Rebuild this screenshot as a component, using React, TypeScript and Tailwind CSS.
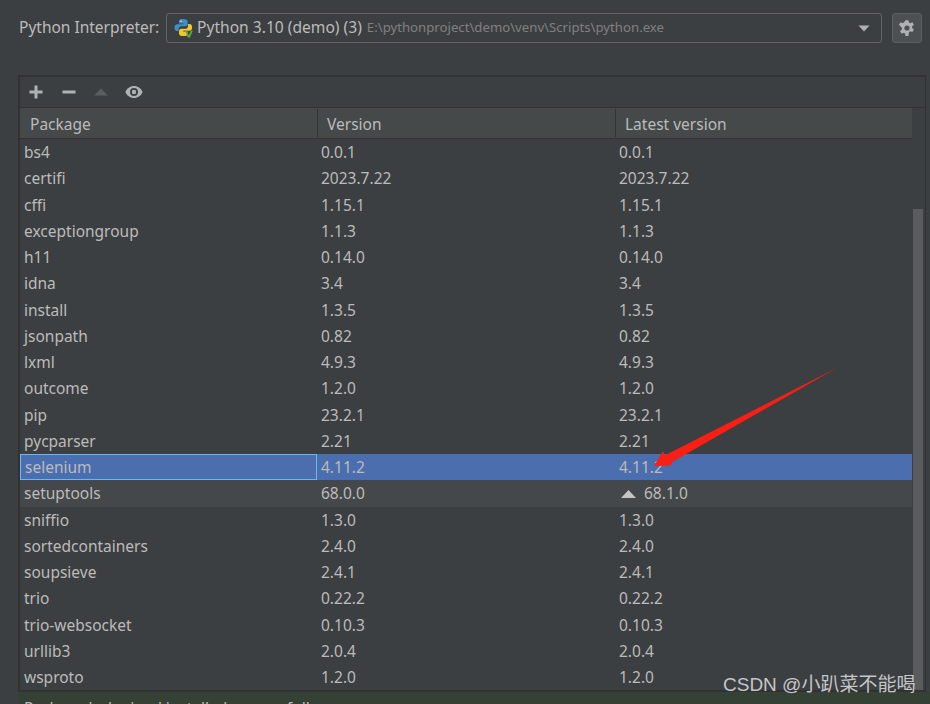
import React from "react";

const rows: [string, string, string][] = [
  ["bs4", "0.0.1", "0.0.1"],
  ["certifi", "2023.7.22", "2023.7.22"],
  ["cffi", "1.15.1", "1.15.1"],
  ["exceptiongroup", "1.1.3", "1.1.3"],
  ["h11", "0.14.0", "0.14.0"],
  ["idna", "3.4", "3.4"],
  ["install", "1.3.5", "1.3.5"],
  ["jsonpath", "0.82", "0.82"],
  ["lxml", "4.9.3", "4.9.3"],
  ["outcome", "1.2.0", "1.2.0"],
  ["pip", "23.2.1", "23.2.1"],
  ["pycparser", "2.21", "2.21"],
  ["selenium", "4.11.2", "4.11.2"],
  ["setuptools", "68.0.0", "68.1.0"],
  ["sniffio", "1.3.0", "1.3.0"],
  ["sortedcontainers", "2.4.0", "2.4.0"],
  ["soupsieve", "2.4.1", "2.4.1"],
  ["trio", "0.22.2", "0.22.2"],
  ["trio-websocket", "0.10.3", "0.10.3"],
  ["urllib3", "2.0.4", "2.0.4"],
  ["wsproto", "1.2.0", "1.2.0"],
];

function PythonIcon() {
  return (
    <svg width="20" height="20" viewBox="0 0 20 20" className="shrink-0">
      <path d="M9 1C5.5 1 5 2.2 5 3.6V5.5h4.4v.8H3.2C1.400 6.300.5 7.600.5 9.600s.9 3.500 2.600 3.500h1.500v-2c0-1.700 1.300-2.900 3-2.900h3.800c1.300 0 2.200-1 2.200-2.300V3.600C13.600 2 12.300 1 9 1z" fill="#3d8fc9" />
      <circle cx="7" cy="3.2" r="0.8" fill="#dfeaf2" />
      <path d="M9.600 18c3.500 0 4-1.200 4-2.600v-1.900H9.200v-.8h6.200c1.800 0 2.700-1.300 2.700-3.300s-.9-3.500-2.600-3.500H14v2c0 1.700-1.300 2.900-3 2.900H7.200C5.900 10.800 5 11.800 5 13.100v2.300C5 17 6.300 18 9.600 18z" fill="#f2c531" />
      <path d="M11 12.500h2.100l1.800 5 1.800-5h2.100L16 19.600h-2.200z" fill="#5cab3c" />
    </svg>
  );
}

function Plus() {
  return (
    <svg width="14" height="14" viewBox="0 0 14 14">
      <path d="M5.500 0.500h3V5.500h5v3h-5v5h-3v-5h-5v-3h5z" fill="#aeb2b5" />
    </svg>
  );
}

function Minus() {
  return (
    <svg width="14" height="14" viewBox="0 0 14 14">
      <rect x="0.500" y="5.500" width="13" height="3" fill="#aeb2b5" />
    </svg>
  );
}

function Up() {
  return (
    <svg width="16" height="10" viewBox="0 0 16 10">
      <path d="M8 1.500l7 7H1z" fill="#5b5e60" />
    </svg>
  );
}

function Eye() {
  return (
    <svg width="18" height="12" viewBox="0 0 18 12">
      <path fillRule="evenodd" d="M9 0c4 0 7.200 2.500 8.600 6C16.200 9.500 13 12 9 12S1.800 9.500.4 6C1.800 2.500 5 0 9 0zm0 2a4 4 0 1 0 0 8 4 4 0 0 0 0-8zm0 1.800a2.200 2.200 0 1 1 0 4.400 2.200 2.200 0 0 1 0-4.400z" fill="#aeb2b5" />
    </svg>
  );
}

function Gear() {
  return (
    <svg width="18" height="18" viewBox="0 0 16 16">
      <path fillRule="evenodd" d="M6.700 0h2.600l.4 2.100c.4.150.8.350 1.100.6l2-.75 1.300 2.250-1.600 1.400c.1.400.1.900 0 1.300l1.600 1.400-1.300 2.250-2-.7c-.3.250-.7.450-1.100.6L9.300 14H6.700l-.4-2.100c-.4-.15-.8-.35-1.100-.6l-2 .75-1.300-2.250 1.600-1.400c-.1-.4-.1-.9 0-1.300L.9 4.200l1.300-2.250 2 .75c.3-.25.7-.45 1.100-.6zM8 4.700a2.300 2.300 0 1 0 0 4.600 2.300 2.300 0 0 0 0-4.600z" transform="translate(0 1)" fill="#afb1b3" />
    </svg>
  );
}

export default function App() {
  return (
    <div
      className="relative w-[930px] h-[704px] overflow-hidden bg-[#3c3f41] text-[15.5px] text-[#bbbbbb]"
      style={{ fontFamily: '"Noto Sans", "Open Sans", sans-serif' }}
    >
      <div className="flex items-center h-[30px] mt-[13px] ml-[19px] mr-[7px]">
        <span className="w-[147px] shrink-0 whitespace-nowrap">Python Interpreter:</span>
        <div className="flex items-center w-[716px] h-[30px] rounded-[3px] border border-[#646464] pl-[7px] pr-[11px]">
          <PythonIcon />
          <span className="ml-[3px] text-[15.6px] whitespace-nowrap">Python 3.10 (demo) (3)</span>
          <span className="ml-[5px] whitespace-nowrap text-[13.2px] text-[#808080]">E:\pythonproject\demo\venv\Scripts\python.exe</span>
          <svg width="12" height="7" viewBox="0 0 12 7" className="ml-auto">
            <path d="M0.500 0.500h11L6 6.500z" fill="#afb1b3" />
          </svg>
        </div>
        <div className="flex items-center justify-center w-[30px] h-[30px] ml-[10px] rounded-[3px] border border-[#5e6060] bg-[#4c5052]">
          <Gear />
        </div>
      </div>

      <div className="mt-[32px] ml-[18px] w-[908px] h-[617px] border border-[#323232] border-t-2 border-l-2 border-b-2 flex flex-col">
        <div className="flex items-center h-[31px] shrink-0 border-b border-[#323232] pl-[9px]">
          <Plus />
          <span className="ml-[19px] flex"><Minus /></span>
          <span className="ml-[17px] flex"><Up /></span>
          <span className="ml-[16px] flex"><Eye /></span>
        </div>
        <div className="flex flex-1 min-h-0">
          <div className="w-[892px] shrink-0 flex flex-col">
            <div className="grid grid-cols-[298px_298px_296px] h-[31.2px] shrink-0 bg-[#45494a] border-b border-[#323232] items-center">
              <div className="pl-[10px] pt-[3px] border-r border-[#323232] h-[28px] flex items-center">Package</div>
              <div className="pl-[9px] pt-[3px] border-r border-[#323232] h-[28px] flex items-center">Version</div>
              <div className="pl-[9px] pt-[3px] h-[28px] flex items-center">Latest version</div>
            </div>
            {rows.map(([name, version, latest]) => {
              const selected = name === "selenium";
              const upgrade = name === "setuptools";
              return (
                <div
                  key={name}
                  className={
                    "grid grid-cols-[297px_298px_297px] h-[26.25px] shrink-0 items-center " +
                    (selected ? "bg-[#4b6eaf]" : upgrade ? "bg-[#45484a]" : "")
                  }
                >
                  <div
                    className={
                      "h-full flex items-center pl-[4px] pt-[1px] " +
                      (selected ? "border border-[#6fb5f0] pl-[3px]" : "")
                    }
                  >
                    {name}
                  </div>
                  <div className="pl-[4px] pt-[1px]">{version}</div>
                  <div className="pl-[4px] pt-[1px] flex items-center">
                    {upgrade && (
                      <svg width="15" height="8" viewBox="0 0 15 8" className="ml-[2px] mr-[8px]">
                        <path d="M7.500 0l7.500 8H0z" fill="#c4c4c4" />
                      </svg>
                    )}
                    {latest}
                  </div>
                </div>
              );
            })}
          </div>
          <div className="flex-1 flex flex-col pt-[101px] pl-[1px] pr-[2px]">
            <div className="flex-1 bg-[#595b5d]" />
          </div>
        </div>
      </div>

      <div className="ml-[18px] h-[30px] bg-[#344134] pl-[6px] pt-[5px] whitespace-nowrap text-[#bbbbbb]">
        Package 'selenium' installed successfully
      </div>

      <svg width="930" height="704" viewBox="0 0 930 704" className="absolute left-0 top-0 pointer-events-none">
        <path d="M836.700 368L672 462 671 465.500 654 466 663 451 664.500 455.500z" fill="#fb1e14" />
      </svg>

      <div
        className="absolute left-[723px] top-[673px] text-[19px] leading-[24px] text-[#c4c6c7] whitespace-nowrap"
        style={{ fontFamily: '"Liberation Sans", "Noto Sans CJK SC", sans-serif' }}
      >
        CSDN @小趴菜不能喝
      </div>
    </div>
  );
}
